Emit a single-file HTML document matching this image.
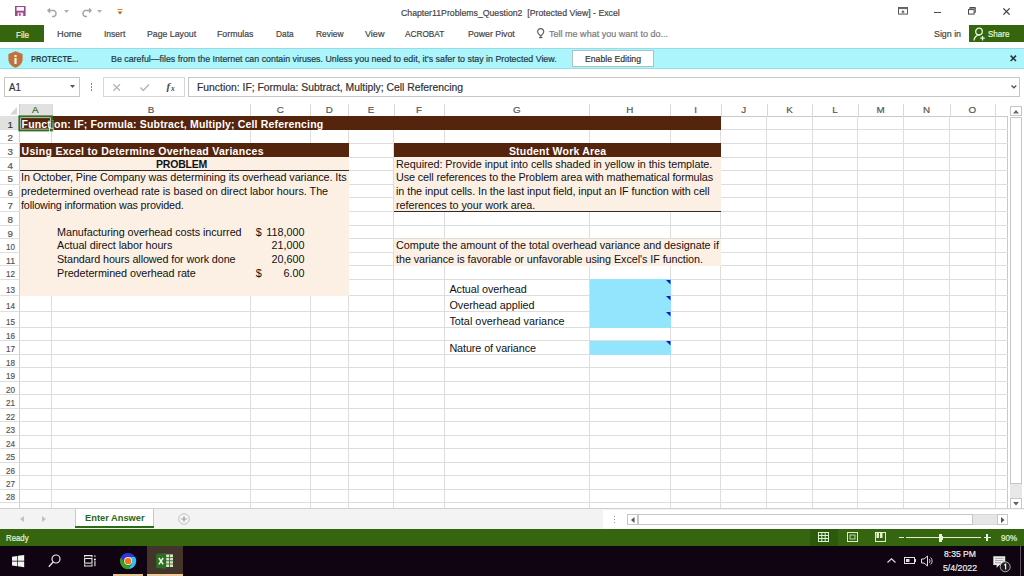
<!DOCTYPE html>
<html><head><meta charset="utf-8"><title>Excel</title>
<style>
html,body{margin:0;padding:0;}
body{width:1024px;height:576px;overflow:hidden;position:relative;background:#fff;font-family:"Liberation Sans",sans-serif;}
div{box-sizing:border-box;}
svg{position:absolute;overflow:visible;}
</style></head><body>
<svg style="left:15px;top:6px" width="11" height="10" viewBox="0 0 11 10"><rect x="0" y="0" width="10.6" height="10" fill="#9a4a8a"/><rect x="1.6" y="1.1" width="7.4" height="3.6" fill="#fff"/><rect x="2.6" y="6.6" width="5.6" height="3.4" fill="#f4e4f0"/><rect x="4.2" y="7.4" width="1.3" height="2.2" fill="#5a2050"/></svg>
<svg style="left:47px;top:6px" width="12" height="11" viewBox="0 0 12 11"><path d="M3 2.5L1 4.5L3 6.5M1.3 4.5H7A3.2 3.2 0 0 1 7 10.5H5" fill="none" stroke="#a6a6a6" stroke-width="1.5"/></svg>
<svg style="left:64px;top:10px" width="5" height="3" viewBox="0 0 5 3"><path d="M0 0H5L2.5 3Z" fill="#b0b0b0"/></svg>
<svg style="left:80px;top:6px" width="12" height="11" viewBox="0 0 12 11"><path d="M9 2.5L11 4.5L9 6.5M10.7 4.5H5A3.2 3.2 0 0 0 5 10.5H7" fill="none" stroke="#a6a6a6" stroke-width="1.5"/></svg>
<svg style="left:97px;top:10px" width="5" height="3" viewBox="0 0 5 3"><path d="M0 0H5L2.5 3Z" fill="#b0b0b0"/></svg>
<svg style="left:117px;top:9px" width="6" height="6" viewBox="0 0 6 6"><rect x="0.5" y="0" width="5" height="1" fill="#d08a3a"/><path d="M0.5 2.5H5.5L3 5.5Z" fill="#c0661a"/></svg>
<div style="position:absolute;left:401.30px;top:8.53px;font:9.3px/9.3px 'Liberation Sans',sans-serif;color:#444444;white-space:pre;transform:scaleX(0.9377);transform-origin:0 0;-webkit-text-stroke:0.2px #444444;">Chapter11Problems_Question2  [Protected View] - Excel</div>
<svg style="left:898px;top:7.2px" width="10" height="7.6" viewBox="0 0 10 7.6"><rect x="0.5" y="0.5" width="9" height="6.6" fill="none" stroke="#5a5a5a" stroke-width="1"/><rect x="0.5" y="0.5" width="9" height="1.6" fill="#6a6a6a"/><path d="M5 3.2L6.9 5.2H3.1Z" fill="#5a5a5a"/><rect x="4.4" y="5" width="1.2" height="1.4" fill="#5a5a5a"/></svg>
<div style="position:absolute;left:934px;top:12.1px;width:6.6px;height:1.4px;background:#4a4a4a"></div>
<svg style="left:968.2px;top:7.2px" width="7.8" height="7.6" viewBox="0 0 7.8 7.6"><rect x="0.5" y="2.6" width="5.6" height="4.5" fill="none" stroke="#4a4a4a" stroke-width="1"/><path d="M1.9 2.6V0.5H7.3V5.4H6.1" fill="none" stroke="#4a4a4a" stroke-width="1"/><rect x="1.9" y="0.5" width="5.4" height="1.1" fill="#4a4a4a"/></svg>
<svg style="left:1003.2px;top:7.7px" width="7" height="7" viewBox="0 0 7 7"><path d="M0.4 0.4L6.6 6.6M6.6 0.4L0.4 6.6" stroke="#3a3a3a" stroke-width="1.25"/></svg>
<div style="position:absolute;left:0px;top:25.2px;width:44px;height:17.2px;background:#35660f"></div>
<div style="position:absolute;left:15.50px;top:30.83px;font:9.3px/9.3px 'Liberation Sans',sans-serif;color:#e6f5dc;white-space:pre;transform:scaleX(0.8745);transform-origin:0 0;-webkit-text-stroke:0.2px #e6f5dc;">File</div>
<div style="position:absolute;left:57.10px;top:29.83px;font:9.3px/9.3px 'Liberation Sans',sans-serif;color:#444444;white-space:pre;transform:scaleX(0.9920);transform-origin:0 0;-webkit-text-stroke:0.2px #444444;">Home</div>
<div style="position:absolute;left:103.70px;top:29.83px;font:9.3px/9.3px 'Liberation Sans',sans-serif;color:#444444;white-space:pre;transform:scaleX(0.9161);transform-origin:0 0;-webkit-text-stroke:0.2px #444444;">Insert</div>
<div style="position:absolute;left:146.60px;top:29.83px;font:9.3px/9.3px 'Liberation Sans',sans-serif;color:#444444;white-space:pre;transform:scaleX(0.9405);transform-origin:0 0;-webkit-text-stroke:0.2px #444444;">Page Layout</div>
<div style="position:absolute;left:217.30px;top:29.83px;font:9.3px/9.3px 'Liberation Sans',sans-serif;color:#444444;white-space:pre;transform:scaleX(0.9421);transform-origin:0 0;-webkit-text-stroke:0.2px #444444;">Formulas</div>
<div style="position:absolute;left:275.90px;top:29.83px;font:9.3px/9.3px 'Liberation Sans',sans-serif;color:#444444;white-space:pre;transform:scaleX(0.8962);transform-origin:0 0;-webkit-text-stroke:0.2px #444444;">Data</div>
<div style="position:absolute;left:315.50px;top:29.83px;font:9.3px/9.3px 'Liberation Sans',sans-serif;color:#444444;white-space:pre;transform:scaleX(0.9054);transform-origin:0 0;-webkit-text-stroke:0.2px #444444;">Review</div>
<div style="position:absolute;left:364.70px;top:29.83px;font:9.3px/9.3px 'Liberation Sans',sans-serif;color:#444444;white-space:pre;transform:scaleX(0.9708);transform-origin:0 0;-webkit-text-stroke:0.2px #444444;">View</div>
<div style="position:absolute;left:405.20px;top:29.83px;font:9.3px/9.3px 'Liberation Sans',sans-serif;color:#444444;white-space:pre;transform:scaleX(0.8881);transform-origin:0 0;-webkit-text-stroke:0.2px #444444;">ACROBAT</div>
<div style="position:absolute;left:467.50px;top:29.83px;font:9.3px/9.3px 'Liberation Sans',sans-serif;color:#444444;white-space:pre;transform:scaleX(0.9435);transform-origin:0 0;-webkit-text-stroke:0.2px #444444;">Power Pivot</div>
<svg style="left:536.8px;top:27.6px" width="7.4" height="10.2" viewBox="0 0 7.4 10.2"><path d="M3.7 0.6A3.1 3.1 0 0 1 6.8 3.7C6.8 5.3 5.2 6.4 3.9 8.2H3.5C2.2 6.4 0.6 5.3 0.6 3.7A3.1 3.1 0 0 1 3.7 0.6Z" fill="none" stroke="#5a5a5a" stroke-width="1.1"/><rect x="2" y="9" width="3.4" height="1.2" fill="#5a5a5a"/></svg>
<div style="position:absolute;left:549.00px;top:29.83px;font:9.3px/9.3px 'Liberation Sans',sans-serif;color:#7a7a7a;white-space:pre;transform:scaleX(0.9717);transform-origin:0 0;-webkit-text-stroke:0.2px #7a7a7a;">Tell me what you want to do...</div>
<div style="position:absolute;left:933.90px;top:29.16px;font:9.5px/9.5px 'Liberation Sans',sans-serif;color:#444444;white-space:pre;transform:scaleX(0.9295);transform-origin:0 0;-webkit-text-stroke:0.2px #444444;">Sign in</div>
<div style="position:absolute;left:968.5px;top:24.9px;width:55.5px;height:16.8px;background:#35660f"></div>
<svg style="left:973px;top:26.7px" width="13" height="14" viewBox="0 0 13 14"><circle cx="6" cy="4.5" r="3.3" fill="none" stroke="#e6f5dc" stroke-width="1.3"/><path d="M1 13.5A5.5 5.5 0 0 1 7 8" fill="none" stroke="#e6f5dc" stroke-width="1.3"/><path d="M9.5 9V13.5M7.3 11.2H11.8" stroke="#e6f5dc" stroke-width="1.3"/></svg>
<div style="position:absolute;left:988.00px;top:28.90px;font:9.8px/9.8px 'Liberation Sans',sans-serif;color:#e6f5dc;white-space:pre;transform:scaleX(0.8224);transform-origin:0 0;-webkit-text-stroke:0.2px #e6f5dc;">Share</div>
<div style="position:absolute;left:0px;top:48px;width:1024px;height:21.3px;background:#adf5fc;border-top:1px solid #94dde6;border-bottom:1px solid #94dde6"></div>
<svg style="left:7.5px;top:51px" width="15" height="17" viewBox="0 0 15 17"><path d="M7.5 0.3L14.6 3V8.5C14.6 12.5 11 15.5 7.5 16.7C4 15.5 0.4 12.5 0.4 8.5V3Z" fill="#bf733a"/><rect x="6.4" y="7" width="2.2" height="6" fill="#fff3e0"/><rect x="6.4" y="4" width="2.2" height="2" fill="#fff3e0"/></svg>
<div style="position:absolute;left:30.70px;top:53.77px;font:bold 9.6px/9.6px 'Liberation Sans',sans-serif;color:#243f48;white-space:pre;transform:scaleX(0.7853);transform-origin:0 0;">PROTECTE...</div>
<div style="position:absolute;left:110.80px;top:55.23px;font:9.3px/9.3px 'Liberation Sans',sans-serif;color:#1f3a42;white-space:pre;transform:scaleX(0.9496);transform-origin:0 0;-webkit-text-stroke:0.2px #1f3a42;">Be careful—files from the Internet can contain viruses. Unless you need to edit, it's safer to stay in Protected View.</div>
<div style="position:absolute;left:572.3px;top:50.2px;width:82.0px;height:16.4px;background:#ffffff;border:1px solid #a9c3c6"></div>
<div style="position:absolute;left:584.70px;top:54.73px;font:9.3px/9.3px 'Liberation Sans',sans-serif;color:#333;white-space:pre;transform:scaleX(0.9340);transform-origin:0 0;-webkit-text-stroke:0.2px #333;">Enable Editing</div>
<svg style="left:1009.6px;top:55.1px" width="6.6" height="6.6" viewBox="0 0 6.6 6.6"><path d="M0.6 0.6L6 6M6 0.6L0.6 6" stroke="#2a3a3e" stroke-width="1.6"/></svg>
<div style="position:absolute;left:4px;top:77.1px;width:76px;height:19.6px;background:#fff;border:1px solid #c6c6c6"></div>
<div style="position:absolute;left:9.00px;top:82.97px;font:10.2px/10.2px 'Liberation Sans',sans-serif;color:#333;white-space:pre;transform:scaleX(0.9430);transform-origin:0 0;-webkit-text-stroke:0.2px #333;">A1</div>
<svg style="left:70px;top:84.6px" width="5" height="3" viewBox="0 0 5 3"><path d="M0 0H5L2.5 3Z" fill="#555"/></svg>
<div style="position:absolute;left:90.9px;top:83px;width:1.4px;height:1.8px;background:#888"></div>
<div style="position:absolute;left:90.9px;top:86px;width:1.4px;height:1.8px;background:#888"></div>
<div style="position:absolute;left:90.9px;top:89px;width:1.4px;height:1.8px;background:#888"></div>
<div style="position:absolute;left:103px;top:77.3px;width:81.7px;height:19.3px;background:#fff;border:1px solid #d6d6d6"></div>
<svg style="left:113.2px;top:83.5px" width="7.4" height="7" viewBox="0 0 7.4 7"><path d="M0.4 0.3L7 6.7M7 0.3L0.4 6.7" stroke="#b4b4b4" stroke-width="1.3"/></svg>
<svg style="left:139.5px;top:83.5px" width="9.4" height="7" viewBox="0 0 9.4 7"><path d="M0.5 3.6L3.2 6.4L9 0.5" fill="none" stroke="#b4b4b4" stroke-width="1.4"/></svg>
<div style="position:absolute;left:166.50px;top:81.49px;font:bold 11px/11px 'Liberation Serif',sans-serif;color:#4a4a4a;white-space:pre;font-style:italic;">f</div>
<div style="position:absolute;left:171.00px;top:84.95px;font:bold 7.5px/7.5px 'Liberation Serif',sans-serif;color:#4a4a4a;white-space:pre;font-style:italic;">x</div>
<div style="position:absolute;left:187.6px;top:77.4px;width:832.0px;height:19.2px;background:#fff;border:1px solid #c6c6c6"></div>
<div style="position:absolute;left:196.90px;top:82.97px;font:10.2px/10.2px 'Liberation Sans',sans-serif;color:#333;white-space:pre;transform:scaleX(1.0173);transform-origin:0 0;-webkit-text-stroke:0.2px #333;">Function: IF; Formula: Subtract, Multiply; Cell Referencing</div>
<svg style="left:1010.9px;top:84.6px" width="5.8" height="3.4" viewBox="0 0 5.8 3.4"><path d="M0.5 0.5L2.9 2.8L5.3 0.5" fill="none" stroke="#555" stroke-width="1.3"/></svg>
<div style="position:absolute;left:19px;top:104px;width:988.5px;height:12.3px;background:#fff"></div>
<div style="position:absolute;left:19px;top:104px;width:32.7px;height:12.3px;background:#e1e1e1"></div>
<svg style="left:10px;top:106.5px" width="7" height="7.5" viewBox="0 0 7 7.5"><path d="M7 0V7.5H0Z" fill="#d6d6d6"/></svg>
<div style="position:absolute;left:19px;top:104px;width:1px;height:12.3px;background:#d8d8d8"></div>
<div style="position:absolute;left:51.7px;top:104px;width:1.0px;height:12.3px;background:#d8d8d8"></div>
<div style="position:absolute;left:250.3px;top:104px;width:1.0px;height:12.3px;background:#d8d8d8"></div>
<div style="position:absolute;left:310.4px;top:104px;width:1.0px;height:12.3px;background:#d8d8d8"></div>
<div style="position:absolute;left:348.2px;top:104px;width:1.0px;height:12.3px;background:#d8d8d8"></div>
<div style="position:absolute;left:393.9px;top:104px;width:1.0px;height:12.3px;background:#d8d8d8"></div>
<div style="position:absolute;left:444.1px;top:104px;width:1.0px;height:12.3px;background:#d8d8d8"></div>
<div style="position:absolute;left:589.3px;top:104px;width:1.0px;height:12.3px;background:#d8d8d8"></div>
<div style="position:absolute;left:670.4px;top:104px;width:1.0px;height:12.3px;background:#d8d8d8"></div>
<div style="position:absolute;left:720.8px;top:104px;width:1.0px;height:12.3px;background:#d8d8d8"></div>
<div style="position:absolute;left:766.5px;top:104px;width:1.0px;height:12.3px;background:#d8d8d8"></div>
<div style="position:absolute;left:812.4px;top:104px;width:1.0px;height:12.3px;background:#d8d8d8"></div>
<div style="position:absolute;left:857.7px;top:104px;width:1.0px;height:12.3px;background:#d8d8d8"></div>
<div style="position:absolute;left:903.4px;top:104px;width:1.0px;height:12.3px;background:#d8d8d8"></div>
<div style="position:absolute;left:949.5px;top:104px;width:1.0px;height:12.3px;background:#d8d8d8"></div>
<div style="position:absolute;left:995.3px;top:104px;width:1.0px;height:12.3px;background:#d8d8d8"></div>
<div style="position:absolute;left:19px;top:115.5px;width:989.0px;height:1.0px;background:#c9c9c9"></div>
<div style="position:absolute;left:32.08px;top:104.90px;font:9.8px/9.8px 'Liberation Sans',sans-serif;color:#2a6a1a;white-space:pre;-webkit-text-stroke:0.2px #2a6a1a;">A</div>
<div style="position:absolute;left:147.73px;top:104.90px;font:9.8px/9.8px 'Liberation Sans',sans-serif;color:#555;white-space:pre;-webkit-text-stroke:0.2px #555;">B</div>
<div style="position:absolute;left:276.81px;top:104.90px;font:9.8px/9.8px 'Liberation Sans',sans-serif;color:#555;white-space:pre;-webkit-text-stroke:0.2px #555;">C</div>
<div style="position:absolute;left:325.76px;top:104.90px;font:9.8px/9.8px 'Liberation Sans',sans-serif;color:#555;white-space:pre;-webkit-text-stroke:0.2px #555;">D</div>
<div style="position:absolute;left:367.78px;top:104.90px;font:9.8px/9.8px 'Liberation Sans',sans-serif;color:#555;white-space:pre;-webkit-text-stroke:0.2px #555;">E</div>
<div style="position:absolute;left:416.01px;top:104.90px;font:9.8px/9.8px 'Liberation Sans',sans-serif;color:#555;white-space:pre;-webkit-text-stroke:0.2px #555;">F</div>
<div style="position:absolute;left:512.89px;top:104.90px;font:9.8px/9.8px 'Liberation Sans',sans-serif;color:#555;white-space:pre;-webkit-text-stroke:0.2px #555;">G</div>
<div style="position:absolute;left:626.31px;top:104.90px;font:9.8px/9.8px 'Liberation Sans',sans-serif;color:#555;white-space:pre;-webkit-text-stroke:0.2px #555;">H</div>
<div style="position:absolute;left:694.24px;top:104.90px;font:9.8px/9.8px 'Liberation Sans',sans-serif;color:#555;white-space:pre;-webkit-text-stroke:0.2px #555;">I</div>
<div style="position:absolute;left:741.20px;top:104.90px;font:9.8px/9.8px 'Liberation Sans',sans-serif;color:#555;white-space:pre;-webkit-text-stroke:0.2px #555;">J</div>
<div style="position:absolute;left:786.18px;top:104.90px;font:9.8px/9.8px 'Liberation Sans',sans-serif;color:#555;white-space:pre;-webkit-text-stroke:0.2px #555;">K</div>
<div style="position:absolute;left:832.33px;top:104.90px;font:9.8px/9.8px 'Liberation Sans',sans-serif;color:#555;white-space:pre;-webkit-text-stroke:0.2px #555;">L</div>
<div style="position:absolute;left:876.47px;top:104.90px;font:9.8px/9.8px 'Liberation Sans',sans-serif;color:#555;white-space:pre;-webkit-text-stroke:0.2px #555;">M</div>
<div style="position:absolute;left:922.91px;top:104.90px;font:9.8px/9.8px 'Liberation Sans',sans-serif;color:#555;white-space:pre;-webkit-text-stroke:0.2px #555;">N</div>
<div style="position:absolute;left:968.59px;top:104.90px;font:9.8px/9.8px 'Liberation Sans',sans-serif;color:#555;white-space:pre;-webkit-text-stroke:0.2px #555;">O</div>
<div style="position:absolute;left:0px;top:116.3px;width:19px;height:392.2px;background:#fff"></div>
<div style="position:absolute;left:0px;top:116.3px;width:19px;height:13.59px;background:#e1e1e1"></div>
<div style="position:absolute;left:18.6px;top:104px;width:1.2px;height:404.5px;background:#cfcfcf"></div>
<div style="position:absolute;left:0px;top:129.39px;width:19px;height:1.0px;background:#dedede"></div>
<div style="position:absolute;left:7.38px;top:119.89px;font:9.8px/9.8px 'Liberation Sans',sans-serif;color:#333;white-space:pre;-webkit-text-stroke:0.2px #333;">1</div>
<div style="position:absolute;left:0px;top:142.98px;width:19px;height:1.0px;background:#dedede"></div>
<div style="position:absolute;left:7.38px;top:133.48px;font:9.8px/9.8px 'Liberation Sans',sans-serif;color:#555;white-space:pre;-webkit-text-stroke:0.2px #555;">2</div>
<div style="position:absolute;left:0px;top:156.57px;width:19px;height:1.0px;background:#dedede"></div>
<div style="position:absolute;left:7.38px;top:147.07px;font:9.8px/9.8px 'Liberation Sans',sans-serif;color:#555;white-space:pre;-webkit-text-stroke:0.2px #555;">3</div>
<div style="position:absolute;left:0px;top:170.16px;width:19px;height:1.0px;background:#dedede"></div>
<div style="position:absolute;left:7.38px;top:160.66px;font:9.8px/9.8px 'Liberation Sans',sans-serif;color:#555;white-space:pre;-webkit-text-stroke:0.2px #555;">4</div>
<div style="position:absolute;left:0px;top:183.75px;width:19px;height:1.0px;background:#dedede"></div>
<div style="position:absolute;left:7.38px;top:174.25px;font:9.8px/9.8px 'Liberation Sans',sans-serif;color:#555;white-space:pre;-webkit-text-stroke:0.2px #555;">5</div>
<div style="position:absolute;left:0px;top:197.34px;width:19px;height:1.0px;background:#dedede"></div>
<div style="position:absolute;left:7.38px;top:187.84px;font:9.8px/9.8px 'Liberation Sans',sans-serif;color:#555;white-space:pre;-webkit-text-stroke:0.2px #555;">6</div>
<div style="position:absolute;left:0px;top:210.93px;width:19px;height:1.0px;background:#dedede"></div>
<div style="position:absolute;left:7.38px;top:201.43px;font:9.8px/9.8px 'Liberation Sans',sans-serif;color:#555;white-space:pre;-webkit-text-stroke:0.2px #555;">7</div>
<div style="position:absolute;left:0px;top:224.52px;width:19px;height:1.0px;background:#dedede"></div>
<div style="position:absolute;left:7.38px;top:215.02px;font:9.8px/9.8px 'Liberation Sans',sans-serif;color:#555;white-space:pre;-webkit-text-stroke:0.2px #555;">8</div>
<div style="position:absolute;left:0px;top:238.11px;width:19px;height:1.0px;background:#dedede"></div>
<div style="position:absolute;left:7.38px;top:228.61px;font:9.8px/9.8px 'Liberation Sans',sans-serif;color:#555;white-space:pre;-webkit-text-stroke:0.2px #555;">9</div>
<div style="position:absolute;left:0px;top:251.7px;width:19px;height:1.0px;background:#dedede"></div>
<div style="position:absolute;left:5.60px;top:242.20px;font:9.8px/9.8px 'Liberation Sans',sans-serif;color:#555;white-space:pre;transform:scaleX(0.8259);transform-origin:0 0;-webkit-text-stroke:0.2px #555;">10</div>
<div style="position:absolute;left:0px;top:265.29px;width:19px;height:1.0px;background:#dedede"></div>
<div style="position:absolute;left:5.60px;top:255.79px;font:9.8px/9.8px 'Liberation Sans',sans-serif;color:#555;white-space:pre;transform:scaleX(0.8850);transform-origin:0 0;-webkit-text-stroke:0.2px #555;">11</div>
<div style="position:absolute;left:0px;top:278.88px;width:19px;height:1.0px;background:#dedede"></div>
<div style="position:absolute;left:5.60px;top:269.38px;font:9.8px/9.8px 'Liberation Sans',sans-serif;color:#555;white-space:pre;transform:scaleX(0.8259);transform-origin:0 0;-webkit-text-stroke:0.2px #555;">12</div>
<div style="position:absolute;left:0px;top:294.93px;width:19px;height:1.0px;background:#dedede"></div>
<div style="position:absolute;left:5.60px;top:285.43px;font:9.8px/9.8px 'Liberation Sans',sans-serif;color:#555;white-space:pre;transform:scaleX(0.8259);transform-origin:0 0;-webkit-text-stroke:0.2px #555;">13</div>
<div style="position:absolute;left:0px;top:310.96px;width:19px;height:1.0px;background:#dedede"></div>
<div style="position:absolute;left:5.60px;top:301.46px;font:9.8px/9.8px 'Liberation Sans',sans-serif;color:#555;white-space:pre;transform:scaleX(0.8259);transform-origin:0 0;-webkit-text-stroke:0.2px #555;">14</div>
<div style="position:absolute;left:0px;top:326.99px;width:19px;height:1.0px;background:#dedede"></div>
<div style="position:absolute;left:5.60px;top:317.49px;font:9.8px/9.8px 'Liberation Sans',sans-serif;color:#555;white-space:pre;transform:scaleX(0.8259);transform-origin:0 0;-webkit-text-stroke:0.2px #555;">15</div>
<div style="position:absolute;left:0px;top:340.46px;width:19px;height:1.0px;background:#dedede"></div>
<div style="position:absolute;left:5.60px;top:330.96px;font:9.8px/9.8px 'Liberation Sans',sans-serif;color:#555;white-space:pre;transform:scaleX(0.8259);transform-origin:0 0;-webkit-text-stroke:0.2px #555;">16</div>
<div style="position:absolute;left:0px;top:353.92px;width:19px;height:1.0px;background:#dedede"></div>
<div style="position:absolute;left:5.60px;top:344.42px;font:9.8px/9.8px 'Liberation Sans',sans-serif;color:#555;white-space:pre;transform:scaleX(0.8259);transform-origin:0 0;-webkit-text-stroke:0.2px #555;">17</div>
<div style="position:absolute;left:0px;top:367.38px;width:19px;height:1.0px;background:#dedede"></div>
<div style="position:absolute;left:5.60px;top:357.88px;font:9.8px/9.8px 'Liberation Sans',sans-serif;color:#555;white-space:pre;transform:scaleX(0.8259);transform-origin:0 0;-webkit-text-stroke:0.2px #555;">18</div>
<div style="position:absolute;left:0px;top:380.84px;width:19px;height:1.0px;background:#dedede"></div>
<div style="position:absolute;left:5.60px;top:371.34px;font:9.8px/9.8px 'Liberation Sans',sans-serif;color:#555;white-space:pre;transform:scaleX(0.8259);transform-origin:0 0;-webkit-text-stroke:0.2px #555;">19</div>
<div style="position:absolute;left:0px;top:394.3px;width:19px;height:1.0px;background:#dedede"></div>
<div style="position:absolute;left:5.60px;top:384.80px;font:9.8px/9.8px 'Liberation Sans',sans-serif;color:#555;white-space:pre;transform:scaleX(0.8259);transform-origin:0 0;-webkit-text-stroke:0.2px #555;">20</div>
<div style="position:absolute;left:0px;top:407.76px;width:19px;height:1.0px;background:#dedede"></div>
<div style="position:absolute;left:5.60px;top:398.26px;font:9.8px/9.8px 'Liberation Sans',sans-serif;color:#555;white-space:pre;transform:scaleX(0.8259);transform-origin:0 0;-webkit-text-stroke:0.2px #555;">21</div>
<div style="position:absolute;left:0px;top:421.22px;width:19px;height:1.0px;background:#dedede"></div>
<div style="position:absolute;left:5.60px;top:411.72px;font:9.8px/9.8px 'Liberation Sans',sans-serif;color:#555;white-space:pre;transform:scaleX(0.8259);transform-origin:0 0;-webkit-text-stroke:0.2px #555;">22</div>
<div style="position:absolute;left:0px;top:434.68px;width:19px;height:1.0px;background:#dedede"></div>
<div style="position:absolute;left:5.60px;top:425.18px;font:9.8px/9.8px 'Liberation Sans',sans-serif;color:#555;white-space:pre;transform:scaleX(0.8259);transform-origin:0 0;-webkit-text-stroke:0.2px #555;">23</div>
<div style="position:absolute;left:0px;top:448.14px;width:19px;height:1.0px;background:#dedede"></div>
<div style="position:absolute;left:5.60px;top:438.64px;font:9.8px/9.8px 'Liberation Sans',sans-serif;color:#555;white-space:pre;transform:scaleX(0.8259);transform-origin:0 0;-webkit-text-stroke:0.2px #555;">24</div>
<div style="position:absolute;left:0px;top:461.6px;width:19px;height:1.0px;background:#dedede"></div>
<div style="position:absolute;left:5.60px;top:452.10px;font:9.8px/9.8px 'Liberation Sans',sans-serif;color:#555;white-space:pre;transform:scaleX(0.8259);transform-origin:0 0;-webkit-text-stroke:0.2px #555;">25</div>
<div style="position:absolute;left:0px;top:475.06px;width:19px;height:1.0px;background:#dedede"></div>
<div style="position:absolute;left:5.60px;top:465.56px;font:9.8px/9.8px 'Liberation Sans',sans-serif;color:#555;white-space:pre;transform:scaleX(0.8259);transform-origin:0 0;-webkit-text-stroke:0.2px #555;">26</div>
<div style="position:absolute;left:0px;top:488.52px;width:19px;height:1.0px;background:#dedede"></div>
<div style="position:absolute;left:5.60px;top:479.02px;font:9.8px/9.8px 'Liberation Sans',sans-serif;color:#555;white-space:pre;transform:scaleX(0.8259);transform-origin:0 0;-webkit-text-stroke:0.2px #555;">27</div>
<div style="position:absolute;left:0px;top:501.98px;width:19px;height:1.0px;background:#dedede"></div>
<div style="position:absolute;left:5.60px;top:492.48px;font:9.8px/9.8px 'Liberation Sans',sans-serif;color:#555;white-space:pre;transform:scaleX(0.8259);transform-origin:0 0;-webkit-text-stroke:0.2px #555;">28</div>
<div style="position:absolute;left:5.60px;top:505.94px;font:9.8px/9.8px 'Liberation Sans',sans-serif;color:#555;white-space:pre;transform:scaleX(0.8259);transform-origin:0 0;-webkit-text-stroke:0.2px #555;">29</div>
<div style="position:absolute;left:51.2px;top:116.3px;width:1.0px;height:392.2px;background:#dddddd"></div>
<div style="position:absolute;left:249.8px;top:116.3px;width:1.0px;height:392.2px;background:#dddddd"></div>
<div style="position:absolute;left:309.9px;top:116.3px;width:1.0px;height:392.2px;background:#dddddd"></div>
<div style="position:absolute;left:347.7px;top:116.3px;width:1.0px;height:392.2px;background:#dddddd"></div>
<div style="position:absolute;left:393.4px;top:116.3px;width:1.0px;height:392.2px;background:#dddddd"></div>
<div style="position:absolute;left:443.6px;top:116.3px;width:1.0px;height:392.2px;background:#dddddd"></div>
<div style="position:absolute;left:588.8px;top:116.3px;width:1.0px;height:392.2px;background:#dddddd"></div>
<div style="position:absolute;left:669.9px;top:116.3px;width:1.0px;height:392.2px;background:#dddddd"></div>
<div style="position:absolute;left:720.3px;top:116.3px;width:1.0px;height:392.2px;background:#dddddd"></div>
<div style="position:absolute;left:766.0px;top:116.3px;width:1.0px;height:392.2px;background:#dddddd"></div>
<div style="position:absolute;left:811.9px;top:116.3px;width:1.0px;height:392.2px;background:#dddddd"></div>
<div style="position:absolute;left:857.2px;top:116.3px;width:1.0px;height:392.2px;background:#dddddd"></div>
<div style="position:absolute;left:902.9px;top:116.3px;width:1.0px;height:392.2px;background:#dddddd"></div>
<div style="position:absolute;left:949.0px;top:116.3px;width:1.0px;height:392.2px;background:#dddddd"></div>
<div style="position:absolute;left:994.8px;top:116.3px;width:1.0px;height:392.2px;background:#dddddd"></div>
<div style="position:absolute;left:1007.0px;top:116.3px;width:1.0px;height:392.2px;background:#c8c8c8"></div>
<div style="position:absolute;left:19px;top:129.39px;width:988.5px;height:1.0px;background:#dddddd"></div>
<div style="position:absolute;left:19px;top:142.98px;width:988.5px;height:1.0px;background:#dddddd"></div>
<div style="position:absolute;left:19px;top:156.57px;width:988.5px;height:1.0px;background:#dddddd"></div>
<div style="position:absolute;left:19px;top:170.16px;width:988.5px;height:1.0px;background:#dddddd"></div>
<div style="position:absolute;left:19px;top:183.75px;width:988.5px;height:1.0px;background:#dddddd"></div>
<div style="position:absolute;left:19px;top:197.34px;width:988.5px;height:1.0px;background:#dddddd"></div>
<div style="position:absolute;left:19px;top:210.93px;width:988.5px;height:1.0px;background:#dddddd"></div>
<div style="position:absolute;left:19px;top:224.52px;width:988.5px;height:1.0px;background:#dddddd"></div>
<div style="position:absolute;left:19px;top:238.11px;width:988.5px;height:1.0px;background:#dddddd"></div>
<div style="position:absolute;left:19px;top:251.7px;width:988.5px;height:1.0px;background:#dddddd"></div>
<div style="position:absolute;left:19px;top:265.29px;width:988.5px;height:1.0px;background:#dddddd"></div>
<div style="position:absolute;left:19px;top:278.88px;width:988.5px;height:1.0px;background:#dddddd"></div>
<div style="position:absolute;left:19px;top:294.93px;width:988.5px;height:1.0px;background:#dddddd"></div>
<div style="position:absolute;left:19px;top:310.96px;width:988.5px;height:1.0px;background:#dddddd"></div>
<div style="position:absolute;left:19px;top:326.99px;width:988.5px;height:1.0px;background:#dddddd"></div>
<div style="position:absolute;left:19px;top:340.46px;width:988.5px;height:1.0px;background:#dddddd"></div>
<div style="position:absolute;left:19px;top:353.92px;width:988.5px;height:1.0px;background:#dddddd"></div>
<div style="position:absolute;left:19px;top:367.38px;width:988.5px;height:1.0px;background:#dddddd"></div>
<div style="position:absolute;left:19px;top:380.84px;width:988.5px;height:1.0px;background:#dddddd"></div>
<div style="position:absolute;left:19px;top:394.3px;width:988.5px;height:1.0px;background:#dddddd"></div>
<div style="position:absolute;left:19px;top:407.76px;width:988.5px;height:1.0px;background:#dddddd"></div>
<div style="position:absolute;left:19px;top:421.22px;width:988.5px;height:1.0px;background:#dddddd"></div>
<div style="position:absolute;left:19px;top:434.68px;width:988.5px;height:1.0px;background:#dddddd"></div>
<div style="position:absolute;left:19px;top:448.14px;width:988.5px;height:1.0px;background:#dddddd"></div>
<div style="position:absolute;left:19px;top:461.6px;width:988.5px;height:1.0px;background:#dddddd"></div>
<div style="position:absolute;left:19px;top:475.06px;width:988.5px;height:1.0px;background:#dddddd"></div>
<div style="position:absolute;left:19px;top:488.52px;width:988.5px;height:1.0px;background:#dddddd"></div>
<div style="position:absolute;left:19px;top:501.98px;width:988.5px;height:1.0px;background:#dddddd"></div>
<div style="position:absolute;left:19.8px;top:116.3px;width:701.5px;height:14.09px;background:#55240c"></div>
<div style="position:absolute;left:19.8px;top:143.48px;width:328.9px;height:14.09px;background:#55240c"></div>
<div style="position:absolute;left:394.4px;top:143.48px;width:326.9px;height:14.09px;background:#55240c"></div>
<div style="position:absolute;left:19.8px;top:157.07px;width:328.9px;height:138.86px;background:#fcf0e5"></div>
<div style="position:absolute;left:394.4px;top:157.07px;width:326.9px;height:54.86px;background:#fcf0e5"></div>
<div style="position:absolute;left:394.4px;top:238.61px;width:326.9px;height:27.68px;background:#fcf0e5"></div>
<div style="position:absolute;left:589.8px;top:279.38px;width:81.1px;height:48.61px;background:#92e5fd"></div>
<div style="position:absolute;left:589.8px;top:340.96px;width:81.1px;height:13.96px;background:#92e5fd"></div>
<div style="position:absolute;left:19.8px;top:170.06px;width:328.9px;height:1.2px;background:#2b2b2b"></div>
<div style="position:absolute;left:394.4px;top:210.83px;width:326.9px;height:1.2px;background:#2b2b2b"></div>
<svg style="left:665.90px;top:279.88px" width="4.5" height="4.5" viewBox="0 0 4.5 4.5"><path d="M0 0H4.5V4.5Z" fill="#1414c8"/></svg>
<svg style="left:665.90px;top:295.93px" width="4.5" height="4.5" viewBox="0 0 4.5 4.5"><path d="M0 0H4.5V4.5Z" fill="#1414c8"/></svg>
<svg style="left:665.90px;top:311.96px" width="4.5" height="4.5" viewBox="0 0 4.5 4.5"><path d="M0 0H4.5V4.5Z" fill="#1414c8"/></svg>
<svg style="left:665.90px;top:341.46px" width="4.5" height="4.5" viewBox="0 0 4.5 4.5"><path d="M0 0H4.5V4.5Z" fill="#1414c8"/></svg>
<div style="position:absolute;left:21.60px;top:119.10px;font:bold 10.5px/10.5px 'Liberation Sans',sans-serif;color:#fff;white-space:pre;letter-spacing:0.171px;">Function: IF; Formula: Subtract, Multiply; Cell Referencing</div>
<div style="position:absolute;left:21.60px;top:145.98px;font:bold 10.5px/10.5px 'Liberation Sans',sans-serif;color:#fff;white-space:pre;letter-spacing:0.285px;">Using Excel to Determine Overhead Variances</div>
<div style="position:absolute;left:508.90px;top:145.98px;font:bold 10.5px/10.5px 'Liberation Sans',sans-serif;color:#fff;white-space:pre;letter-spacing:0.211px;">Student Work Area</div>
<div style="position:absolute;left:156.00px;top:159.37px;font:bold 10.5px/10.5px 'Liberation Sans',sans-serif;color:#111;white-space:pre;letter-spacing:-0.208px;">PROBLEM</div>
<div style="position:absolute;left:21.00px;top:172.41px;font:10.8px/10.8px 'Liberation Sans',sans-serif;color:#111;white-space:pre;letter-spacing:-0.087px;">In October, Pine Company was determining its overhead variance. Its</div>
<div style="position:absolute;left:21.00px;top:186.00px;font:10.8px/10.8px 'Liberation Sans',sans-serif;color:#111;white-space:pre;letter-spacing:-0.019px;">predetermined overhead rate is based on direct labor hours. The</div>
<div style="position:absolute;left:21.00px;top:199.59px;font:10.8px/10.8px 'Liberation Sans',sans-serif;color:#111;white-space:pre;letter-spacing:-0.154px;">following information was provided.</div>
<div style="position:absolute;left:396.00px;top:158.82px;font:10.8px/10.8px 'Liberation Sans',sans-serif;color:#111;white-space:pre;letter-spacing:-0.044px;">Required: Provide input into cells shaded in yellow in this template.</div>
<div style="position:absolute;left:396.00px;top:172.41px;font:10.8px/10.8px 'Liberation Sans',sans-serif;color:#111;white-space:pre;letter-spacing:-0.108px;">Use cell references to the Problem area with mathematical formulas</div>
<div style="position:absolute;left:396.00px;top:186.00px;font:10.8px/10.8px 'Liberation Sans',sans-serif;color:#111;white-space:pre;letter-spacing:-0.069px;">in the input cells. In the last input field, input an IF function with cell</div>
<div style="position:absolute;left:396.00px;top:199.59px;font:10.8px/10.8px 'Liberation Sans',sans-serif;color:#111;white-space:pre;letter-spacing:-0.044px;">references to your work area.</div>
<div style="position:absolute;left:57.00px;top:226.87px;font:10.8px/10.8px 'Liberation Sans',sans-serif;color:#111;white-space:pre;letter-spacing:-0.057px;">Manufacturing overhead costs incurred</div>
<div style="position:absolute;left:57.00px;top:240.46px;font:10.8px/10.8px 'Liberation Sans',sans-serif;color:#111;white-space:pre;letter-spacing:-0.047px;">Actual direct labor hours</div>
<div style="position:absolute;left:57.00px;top:254.05px;font:10.8px/10.8px 'Liberation Sans',sans-serif;color:#111;white-space:pre;letter-spacing:-0.093px;">Standard hours allowed for work done</div>
<div style="position:absolute;left:57.00px;top:267.64px;font:10.8px/10.8px 'Liberation Sans',sans-serif;color:#111;white-space:pre;letter-spacing:-0.063px;">Predetermined overhead rate</div>
<div style="position:absolute;left:255.80px;top:226.87px;font:10.8px/10.8px 'Liberation Sans',sans-serif;color:#111;white-space:pre;">$</div>
<div style="position:absolute;left:255.80px;top:267.64px;font:10.8px/10.8px 'Liberation Sans',sans-serif;color:#111;white-space:pre;">$</div>
<div style="position:absolute;left:266.27px;top:226.87px;font:10.8px/10.8px 'Liberation Sans',sans-serif;color:#111;white-space:pre;">118,000</div>
<div style="position:absolute;left:271.48px;top:240.46px;font:10.8px/10.8px 'Liberation Sans',sans-serif;color:#111;white-space:pre;">21,000</div>
<div style="position:absolute;left:271.48px;top:254.05px;font:10.8px/10.8px 'Liberation Sans',sans-serif;color:#111;white-space:pre;">20,600</div>
<div style="position:absolute;left:283.49px;top:267.64px;font:10.8px/10.8px 'Liberation Sans',sans-serif;color:#111;white-space:pre;">6.00</div>
<div style="position:absolute;left:396.00px;top:240.36px;font:10.8px/10.8px 'Liberation Sans',sans-serif;color:#111;white-space:pre;letter-spacing:-0.037px;">Compute the amount of the total overhead variance and designate if</div>
<div style="position:absolute;left:396.00px;top:253.95px;font:10.8px/10.8px 'Liberation Sans',sans-serif;color:#111;white-space:pre;letter-spacing:-0.063px;">the variance is favorable or unfavorable using Excel's IF function.</div>
<div style="position:absolute;left:449.40px;top:283.79px;font:10.8px/10.8px 'Liberation Sans',sans-serif;color:#111;white-space:pre;letter-spacing:-0.052px;">Actual overhead</div>
<div style="position:absolute;left:449.40px;top:299.52px;font:10.8px/10.8px 'Liberation Sans',sans-serif;color:#111;white-space:pre;">Overhead applied</div>
<div style="position:absolute;left:449.40px;top:315.65px;font:10.8px/10.8px 'Liberation Sans',sans-serif;color:#111;white-space:pre;letter-spacing:0.026px;">Total overhead variance</div>
<div style="position:absolute;left:449.40px;top:342.58px;font:10.8px/10.8px 'Liberation Sans',sans-serif;color:#111;white-space:pre;letter-spacing:-0.095px;">Nature of variance</div>
<svg style="left:17px;top:114px" width="38" height="19" viewBox="0 0 38 19"><rect x="2.3" y="2.3" width="32.6" height="14.2" fill="none" stroke="#2f6e2a" stroke-width="1.8"/><rect x="3.7" y="3.7" width="29.8" height="11.4" fill="none" stroke="#d6ecc8" stroke-width="0.8"/><rect x="32.4" y="14.2" width="3.8" height="3.6" fill="#2f6e2a" stroke="#fff" stroke-width="0.7"/></svg>
<div style="position:absolute;left:1008px;top:104px;width:16px;height:404.5px;background:#fff"></div>
<div style="position:absolute;left:1010.1px;top:106.2px;width:11.7px;height:10.3px;background:#fff;border:1px solid #c6c6c6"></div>
<svg style="left:1013px;top:109.5px" width="6" height="3.5" viewBox="0 0 6 3.5"><path d="M0 3.5H6L3 0Z" fill="#666"/></svg>
<div style="position:absolute;left:1010.1px;top:116.5px;width:11.7px;height:367.0px;background:#fff;border:1px solid #c6c6c6"></div>
<div style="position:absolute;left:1010.1px;top:483.5px;width:11.7px;height:14.5px;background:#e8e8e8"></div>
<div style="position:absolute;left:1010.1px;top:498px;width:11.7px;height:11px;background:#fff;border:1px solid #c6c6c6"></div>
<svg style="left:1013px;top:502px" width="6" height="3.5" viewBox="0 0 6 3.5"><path d="M0 0H6L3 3.5Z" fill="#666"/></svg>
<div style="position:absolute;left:0px;top:508.5px;width:1024px;height:20.8px;background:#f3f3f3"></div>
<div style="position:absolute;left:0px;top:508px;width:1024px;height:1px;background:#d0d0d0"></div>
<svg style="left:20px;top:515.5px" width="4" height="6" viewBox="0 0 4 6"><path d="M4 0V6L0 3Z" fill="#c2c2c2"/></svg>
<svg style="left:41.5px;top:515.5px" width="4" height="6" viewBox="0 0 4 6"><path d="M0 0V6L4 3Z" fill="#c2c2c2"/></svg>
<div style="position:absolute;left:75.2px;top:508.6px;width:78.6px;height:19.0px;background:#fff;border-left:1px solid #c8c8c8;border-right:1px solid #c8c8c8"></div>
<div style="position:absolute;left:75.2px;top:525.8px;width:78.6px;height:1.8px;background:#2a6a1a"></div>
<div style="position:absolute;left:84.60px;top:513.27px;font:bold 9.6px/9.6px 'Liberation Sans',sans-serif;color:#2a6a1a;white-space:pre;transform:scaleX(0.9702);transform-origin:0 0;">Enter Answer</div>
<svg style="left:178px;top:513px" width="12" height="12" viewBox="0 0 12 12"><circle cx="6" cy="6" r="5.3" fill="none" stroke="#c4c4c4" stroke-width="1"/><path d="M6 3.2V8.8M3.2 6H8.8" stroke="#9a9a9a" stroke-width="1.1"/></svg>
<div style="position:absolute;left:603.3px;top:509.5px;width:420.7px;height:19.8px;background:#fff"></div>
<div style="position:absolute;left:614.3px;top:516px;width:1.2px;height:1.2px;background:#999"></div>
<div style="position:absolute;left:614.3px;top:519px;width:1.2px;height:1.2px;background:#999"></div>
<div style="position:absolute;left:614.3px;top:522px;width:1.2px;height:1.2px;background:#999"></div>
<div style="position:absolute;left:626.9px;top:514px;width:11.1px;height:11.2px;background:#fff;border:1px solid #c6c6c6"></div>
<svg style="left:630.5px;top:516.8px" width="3.5" height="6" viewBox="0 0 3.5 6"><path d="M3.5 0V6L0 3Z" fill="#555"/></svg>
<div style="position:absolute;left:637.5px;top:514px;width:335.3px;height:11.2px;background:#fff;border:1px solid #c6c6c6"></div>
<div style="position:absolute;left:972.8px;top:514px;width:24.2px;height:11.2px;background:#e6e6e6;border-top:1px solid #d8d8d8;border-bottom:1px solid #d8d8d8"></div>
<div style="position:absolute;left:997px;top:514px;width:10.6px;height:11.2px;background:#fff;border:1px solid #c6c6c6"></div>
<svg style="left:1000.8px;top:516.8px" width="3.5" height="6" viewBox="0 0 3.5 6"><path d="M0 0V6L3.5 3Z" fill="#555"/></svg>
<div style="position:absolute;left:0px;top:529.3px;width:1024px;height:16.5px;background:#35660f"></div>
<div style="position:absolute;left:5.90px;top:533.93px;font:9.3px/9.3px 'Liberation Sans',sans-serif;color:#e6f5dc;white-space:pre;transform:scaleX(0.8410);transform-origin:0 0;-webkit-text-stroke:0.2px #e6f5dc;">Ready</div>
<div style="position:absolute;left:810px;top:529.3px;width:28px;height:16.5px;background:#2b5a0c"></div>
<svg style="left:818px;top:532px" width="11" height="10" viewBox="0 0 11 10"><rect x="0.5" y="0.5" width="10" height="9" fill="none" stroke="#dff0d0" stroke-width="1"/><path d="M3.8 0.5V9.5M7.2 0.5V9.5M0.5 3.5H10.5M0.5 6.5H10.5" stroke="#dff0d0" stroke-width="1"/></svg>
<svg style="left:847px;top:532px" width="11" height="10" viewBox="0 0 11 10"><rect x="0.5" y="0.5" width="10" height="9" fill="none" stroke="#dff0d0" stroke-width="1"/><rect x="3" y="3" width="5" height="4" fill="none" stroke="#dff0d0" stroke-width="0.8"/></svg>
<svg style="left:875px;top:532px" width="11" height="10" viewBox="0 0 11 10"><rect x="0.5" y="0.5" width="10" height="9" fill="none" stroke="#dff0d0" stroke-width="1"/><rect x="1.5" y="1" width="2.5" height="5" fill="#dff0d0"/><rect x="5" y="1" width="2.5" height="5" fill="#dff0d0"/></svg>
<div style="position:absolute;left:899px;top:537px;width:5px;height:1.3px;background:#e6f5dc"></div>
<div style="position:absolute;left:906px;top:537.2px;width:75px;height:0.9px;background:#dff0d0"></div>
<div style="position:absolute;left:938.5px;top:533.5px;width:3.0px;height:8.5px;background:#e6f5dc"></div>
<div style="position:absolute;left:941.5px;top:535.5px;width:1.0px;height:4.5px;background:#dff0d0"></div>
<div style="position:absolute;left:983.5px;top:537px;width:7.0px;height:1.4px;background:#e6f5dc"></div>
<div style="position:absolute;left:986.3px;top:534.2px;width:1.4px;height:7.0px;background:#e6f5dc"></div>
<div style="position:absolute;left:1001.00px;top:533.93px;font:9.3px/9.3px 'Liberation Sans',sans-serif;color:#e6f5dc;white-space:pre;transform:scaleX(0.8599);transform-origin:0 0;-webkit-text-stroke:0.2px #e6f5dc;">90%</div>
<div style="position:absolute;left:0px;top:545.8px;width:1024px;height:30.2px;background:#100312"></div>
<svg style="left:11.8px;top:554.8px" width="12.2" height="12.2" viewBox="0 0 13 13"><path d="M0 1.8L5.6 1V6.1H0ZM6.3 0.9L13 0V6.1H6.3ZM0 6.8H5.6V12L0 11.2ZM6.3 6.8H13V13L6.3 12.1Z" fill="#f4f4f4"/></svg>
<svg style="left:47.5px;top:554px" width="13" height="14" viewBox="0 0 13 14"><circle cx="8" cy="5" r="4" fill="none" stroke="#e8e8e8" stroke-width="1.2"/><path d="M5.2 8L0.8 12.8" stroke="#e8e8e8" stroke-width="1.3"/></svg>
<svg style="left:83.7px;top:554.9px" width="12.5" height="11.6" viewBox="0 0 12.5 11.6"><path d="M0.6 2.3V0.6H8V2.3M0.6 9.3V11H8V9.3" fill="none" stroke="#e8e8e8" stroke-width="1.1"/><rect x="0.6" y="3.5" width="7.4" height="4.6" fill="none" stroke="#e8e8e8" stroke-width="1.1"/><rect x="10.3" y="0.2" width="1.2" height="1.9" fill="#bdbdbd"/><circle cx="10.9" cy="4.5" r="1" fill="#ffffff"/><rect x="10.3" y="6.1" width="1.2" height="5.1" fill="#d8d8d8"/></svg>
<svg style="left:120px;top:553px" width="16.2" height="16.2" viewBox="-8.1 -8.1 16.2 16.2"><path d="M0.00 -4.10L6.99 -4.10A8.1 8.1 0 0 0 -7.04 -4.00L-3.55 2.05A4.1 4.1 0 0 1 0.00 -4.10Z" fill="#3434dc"/><path d="M3.55 2.05L0.06 8.10A8.1 8.1 0 0 0 6.99 -4.10L0.00 -4.10A4.1 4.1 0 0 1 3.55 2.05Z" fill="#30c0f4"/><path d="M-3.55 2.05L-7.04 -4.00A8.1 8.1 0 0 0 0.06 8.10L3.55 2.05A4.1 4.1 0 0 1 -3.55 2.05Z" fill="#3c9e24"/><circle r="4.1" fill="#f4f2dc"/><circle r="3.2" fill="#f07418"/></svg>
<div style="position:absolute;left:113px;top:574px;width:30px;height:2px;background:#e6c49a"></div>
<div style="position:absolute;left:147px;top:545.8px;width:36px;height:30.2px;background:#43352a"></div>
<div style="position:absolute;left:147px;top:574px;width:36px;height:2px;background:#f0c89a"></div>
<svg style="left:156px;top:552.6px" width="18" height="16" viewBox="0 0 18 16"><rect x="10" y="1.4" width="7" height="12.6" fill="#dbe8c8"/><path d="M13.5 1.4V14M10 4.6H17M10 7.8H17M10 11H17" stroke="#3a6a30" stroke-width="0.9"/><path d="M0.2 0.8L10.2 0V15.8L0.2 15Z" fill="#2c6e24"/><path d="M2.8 5L7.2 11.4M7.2 5L2.8 11.4" stroke="#e6f2dc" stroke-width="1.6"/></svg>
<svg style="left:887px;top:557.5px" width="9" height="5" viewBox="0 0 9 5"><path d="M0.5 4.5L4.5 0.8L8.5 4.5" fill="none" stroke="#e0e0e0" stroke-width="1.1"/></svg>
<svg style="left:904px;top:557px" width="12" height="7" viewBox="0 0 12 7"><rect x="0.5" y="0.5" width="10" height="6" fill="none" stroke="#e0e0e0" stroke-width="1"/><rect x="2" y="2" width="3.5" height="3" fill="#e0e0e0"/><rect x="10.8" y="2" width="1.2" height="3" fill="#e0e0e0"/></svg>
<svg style="left:921px;top:554.5px" width="12" height="12" viewBox="0 0 12 12"><path d="M0.5 4H3L6.5 1V11L3 8H0.5Z" fill="none" stroke="#e0e0e0" stroke-width="1"/><path d="M8 4A2.5 2.5 0 0 1 8 8M9.5 2.5A4.5 4.5 0 0 1 9.5 9.5" fill="none" stroke="#e0e0e0" stroke-width="0.9"/></svg>
<div style="position:absolute;left:944.00px;top:549.10px;font:9.8px/9.8px 'Liberation Sans',sans-serif;color:#f0f0f0;white-space:pre;transform:scaleX(0.8771);transform-origin:0 0;-webkit-text-stroke:0.2px #f0f0f0;">8:35 PM</div>
<div style="position:absolute;left:943.00px;top:562.90px;font:9.8px/9.8px 'Liberation Sans',sans-serif;color:#f0f0f0;white-space:pre;transform:scaleX(0.8916);transform-origin:0 0;-webkit-text-stroke:0.2px #f0f0f0;">5/4/2022</div>
<svg style="left:993px;top:555.5px" width="18" height="17" viewBox="0 0 18 17"><path d="M0.3 0.3H12.2V9H6.5L3.6 11.8V9H0.3Z" fill="#ececec"/><path d="M2 2.4H10.5M2 4.6H10.5M2 6.8H8" stroke="#8a8a8a" stroke-width="0.7"/><circle cx="12.2" cy="10.8" r="5" fill="#1c1a1c" stroke="#bdbdbd" stroke-width="0.9"/><path d="M11.2 9.2L12.6 8.2V13.6" stroke="#f0f0f0" stroke-width="1.2" fill="none"/></svg>
<div style="position:absolute;left:1020px;top:546px;width:1px;height:30px;background:#555"></div>
</body></html>
